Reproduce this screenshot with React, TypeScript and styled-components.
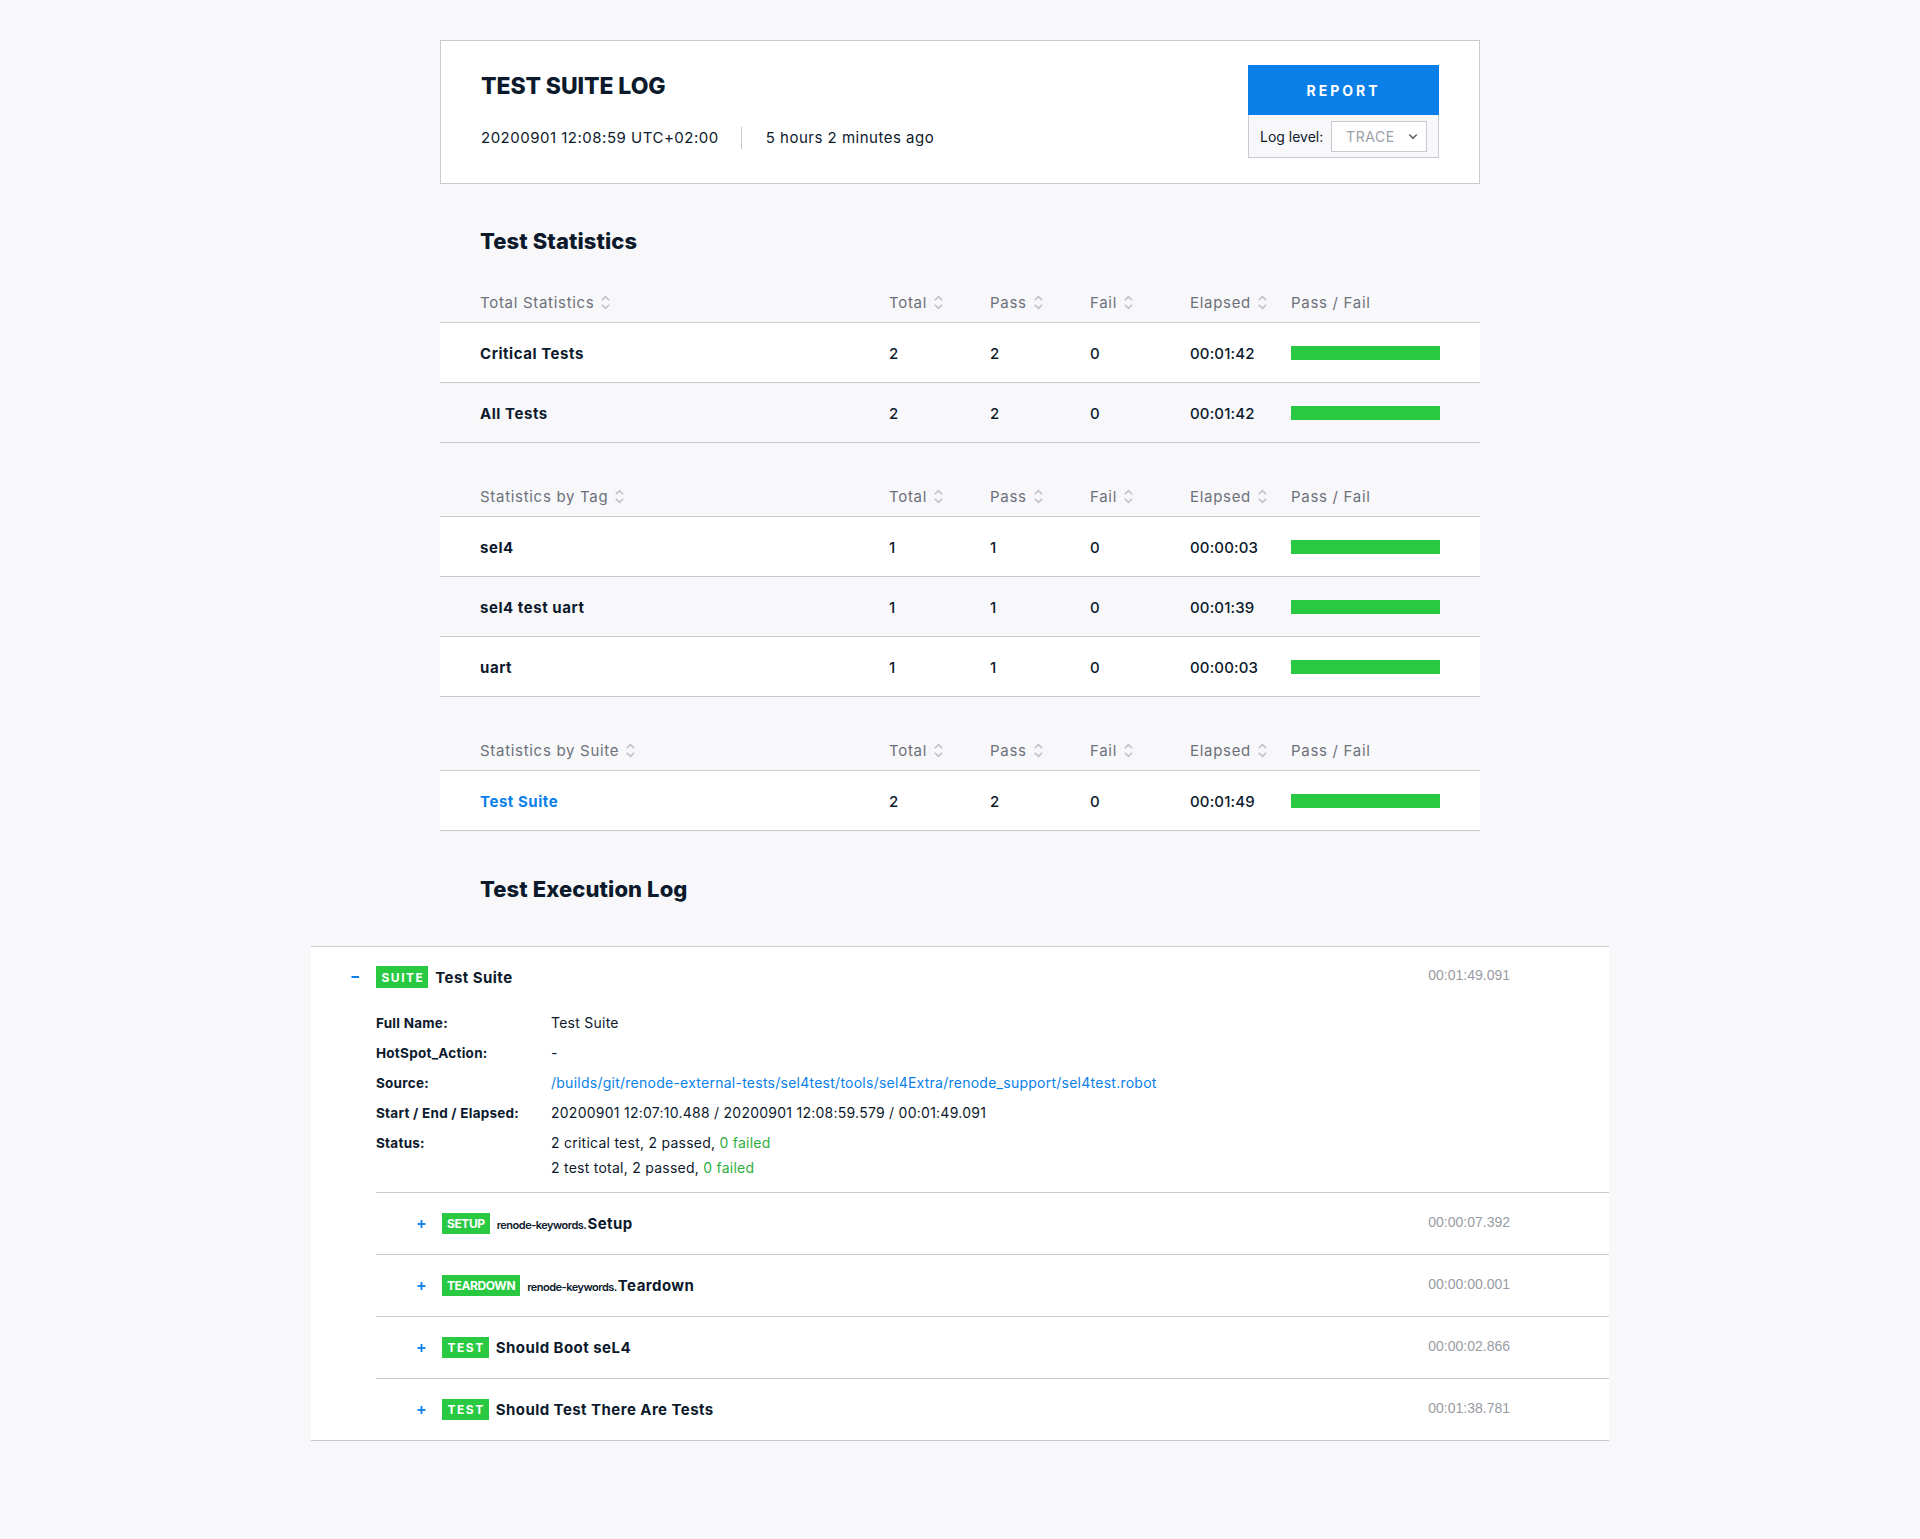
import React from "react";
import styled, { createGlobalStyle } from "styled-components";

const C = {
  bg: "#f8f8fa",
  text: "#0c1a2c",
  border: "#c9cacf",
  muted: "#6d717b",
  blue: "#0a7fe8",
  green: "#29c942",
  time: "#979ba3",
};

const GlobalStyle = createGlobalStyle`
  html, body { margin: 0; padding: 0; }
  body {
    background: ${C.bg};
    color: ${C.text};
    font-family: Inter, "Noto Sans", "DejaVu Sans", sans-serif;
    min-height: 1539px;
  }
  * { box-sizing: border-box; }
`;

const Page = styled.div`
  padding: 40px 0 100px;
`;

const Container = styled.div`
  width: 1040px;
  margin: 0 auto;
`;

const HeaderCard = styled.header`
  display: flex;
  justify-content: space-between;
  height: 144px;
  background: #fff;
  border: 1px solid ${C.border};
  padding: 24px 40px 0 40px;
`;

const HeaderInfo = styled.div`
  padding-top: 8px;
`;

const Title = styled.h1`
  margin: 0;
  font-size: 23px;
  line-height: 26px;
  font-weight: 800;
  letter-spacing: -0.1px;
`;

const MetaLine = styled.div`
  display: flex;
  align-items: center;
  margin-top: 28px;
  font-size: 15px;
  line-height: 22px;
  letter-spacing: 0.5px;
`;

const Divider = styled.span`
  width: 1px;
  height: 22px;
  background: ${C.border};
  margin: 0 24px 0 22px;
`;

const Actions = styled.div`
  width: 191px;
  display: flex;
  flex-direction: column;
`;

const ReportButton = styled.button`
  height: 50px;
  border: none;
  background: ${C.blue};
  color: #fff;
  font-family: inherit;
  font-size: 14px;
  font-weight: 700;
  letter-spacing: 3px;
  cursor: pointer;
`;

const LogLevel = styled.div`
  height: 43px;
  display: flex;
  align-items: center;
  padding: 0 11px;
  background: ${C.bg};
  border: 1px solid ${C.border};
  border-top: none;
  font-size: 14px;
`;

const SelectBox = styled.div`
  margin-left: auto;
  width: 96px;
  height: 31px;
  display: flex;
  align-items: center;
  justify-content: space-between;
  padding: 0 8px 0 14px;
  background: #fff;
  border: 1px solid ${C.border};
  color: #9aa0a8;
  font-size: 14px;
  letter-spacing: 0.6px;
`;

const SectionTitle = styled.h2<{ $top: number }>`
  margin: ${(p) => p.$top}px 0 0 40px;
  font-size: 22px;
  line-height: 28px;
  font-weight: 800;
  letter-spacing: 0.1px;
`;

const StatTable = styled.div<{ $top: number }>`
  margin-top: ${(p) => p.$top}px;
`;

const gridCols = `409px 101px 100px 100px 101px 1fr`;

const HeadRow = styled.div`
  display: grid;
  grid-template-columns: ${gridCols};
  align-items: center;
  height: 43px;
  padding: 3px 39px 0 40px;
  border-bottom: 1px solid ${C.border};
  color: ${C.muted};
  font-size: 15px;
  letter-spacing: 0.7px;
`;

const HeadCell = styled.div`
  display: flex;
  align-items: center;
  gap: 6px;
`;

const DataRow = styled.div<{ $alt?: boolean }>`
  display: grid;
  grid-template-columns: ${gridCols};
  align-items: center;
  height: 60px;
  padding: 1px 39px 0 40px;
  background: ${(p) => (p.$alt ? "transparent" : "#fff")};
  border-bottom: 1px solid ${C.border};
  font-size: 15px;
  font-weight: 500;
  letter-spacing: 0.15px;
`;

const NameCell = styled.div<{ $link?: boolean }>`
  font-weight: 700;
  letter-spacing: 0.55px;
  color: ${(p) => (p.$link ? C.blue : C.text)};
`;

const BarTrack = styled.div`
  width: 149px;
  height: 14px;
  background: #e04b4b;
  display: flex;
`;

const BarFill = styled.div`
  height: 100%;
  background: ${C.green};
`;

const LogPanel = styled.section`
  width: 1298px;
  margin: 43px auto 0;
  background: #fff;
  border-top: 1px solid ${C.border};
  border-bottom: 1px solid ${C.border};
`;

const SuiteHeader = styled.div`
  display: flex;
  align-items: center;
  padding: 19px 99px 0 40px;
  height: 41px;
`;

const Toggle = styled.span`
  width: 25px;
  display: flex;
  align-items: center;
`;

const Badge = styled.span<{ $spaced?: boolean; $h: number }>`
  display: inline-flex;
  align-items: center;
  height: ${(p) => p.$h}px;
  padding: 0 ${(p) => (p.$spaced ? 4 : 5)}px 0 ${(p) => (p.$spaced ? 5.5 : 5)}px;
  background: ${C.green};
  color: #fff;
  font-size: 12px;
  font-weight: 700;
  letter-spacing: ${(p) => (p.$spaced ? "1.5px" : "-0.4px")};
`;

const ItemName = styled.span`
  margin-left: 7px;
  font-size: 15px;
  font-weight: 700;
  letter-spacing: 0.45px;
  display: flex;
  align-items: baseline;
`;

const Library = styled.span`
  font-size: 11px;
  font-weight: 600;
  letter-spacing: -0.5px;
  margin-right: 1px;
`;

const Time = styled.span`
  margin-left: auto;
  margin-bottom: 4px;
  font-family: "Liberation Sans", Arial, sans-serif;
  font-size: 14px;
  color: ${C.time};
`;

const Metadata = styled.div`
  margin-left: 65px;
  padding: 20px 0 9px;
  font-size: 14px;
  letter-spacing: 0.25px;
`;

const MetaRow = styled.div`
  display: grid;
  grid-template-columns: 175px 1fr;
  padding: 5px 0;
  line-height: 20px;
`;

const MetaLabel = styled.div`
  font-weight: 700;
  font-size: 13.5px;
`;

const MetaValue = styled.div``;

const Link = styled.a`
  color: ${C.blue};
  text-decoration: none;
`;

const Failed = styled.span`
  color: #2fae3f;
`;

const StatusLine = styled.div<{ $second?: boolean }>`
  margin-top: ${(p) => (p.$second ? 5 : 0)}px;
`;

const Children = styled.div`
  margin-left: 65px;
`;

const ChildRow = styled.div`
  display: flex;
  align-items: center;
  height: 62px;
  padding: 0 99px 0 41px;
  border-top: 1px solid ${C.border};
`;

const SortIcon = () => (
  <svg width="11" height="15" viewBox="0 0 11 15" fill="none">
    <path d="M1.8 5.2 L5.5 1.6 L9.2 5.2" stroke="#bfc2c8" strokeWidth="1.6" />
    <path d="M1.8 9.8 L5.5 13.4 L9.2 9.8" stroke="#bfc2c8" strokeWidth="1.6" />
  </svg>
);

const Chevron = () => (
  <svg width="10" height="7" viewBox="0 0 10 7" fill="none">
    <path d="M1.2 1.5 L5 5.2 L8.8 1.5" stroke="#6a6e76" strokeWidth="1.7" />
  </svg>
);

const MinusIcon = () => (
  <svg width="9" height="10" viewBox="0 0 9 10">
    <rect x="0.5" y="4" width="7.5" height="2" fill={C.blue} />
  </svg>
);

const PlusIcon = () => (
  <svg width="9" height="10" viewBox="0 0 9 10">
    <rect x="0.5" y="4.1" width="8" height="1.8" fill={C.blue} />
    <rect x="3.6" y="1" width="1.8" height="8" fill={C.blue} />
  </svg>
);

type Stat = { name: string; total: number; pass: number; fail: number; elapsed: string; link?: boolean };

const totals: Stat[] = [
  { name: "Critical Tests", total: 2, pass: 2, fail: 0, elapsed: "00:01:42" },
  { name: "All Tests", total: 2, pass: 2, fail: 0, elapsed: "00:01:42" },
];
const tags: Stat[] = [
  { name: "sel4", total: 1, pass: 1, fail: 0, elapsed: "00:00:03" },
  { name: "sel4 test uart", total: 1, pass: 1, fail: 0, elapsed: "00:01:39" },
  { name: "uart", total: 1, pass: 1, fail: 0, elapsed: "00:00:03" },
];
const suites: Stat[] = [
  { name: "Test Suite", total: 2, pass: 2, fail: 0, elapsed: "00:01:49", link: true },
];

const StatsBlock = ({ title, rows, top }: { title: string; rows: Stat[]; top: number }) => (
  <StatTable $top={top}>
    <HeadRow>
      <HeadCell>
        {title} <SortIcon />
      </HeadCell>
      <HeadCell>
        Total <SortIcon />
      </HeadCell>
      <HeadCell>
        Pass <SortIcon />
      </HeadCell>
      <HeadCell>
        Fail <SortIcon />
      </HeadCell>
      <HeadCell>
        Elapsed <SortIcon />
      </HeadCell>
      <HeadCell>Pass / Fail</HeadCell>
    </HeadRow>
    {rows.map((r, i) => (
      <DataRow key={r.name} $alt={i % 2 === 1}>
        <NameCell $link={r.link}>{r.name}</NameCell>
        <div>{r.total}</div>
        <div>{r.pass}</div>
        <div>{r.fail}</div>
        <div>{r.elapsed}</div>
        <BarTrack>
          <BarFill style={{ width: `${(r.pass / r.total) * 100}%` }} />
        </BarTrack>
      </DataRow>
    ))}
  </StatTable>
);

type Child = { badge: string; spaced: boolean; lib?: string; name: string; time: string };
const children: Child[] = [
  { badge: "SETUP", spaced: false, lib: "renode-keywords", name: "Setup", time: "00:00:07.392" },
  { badge: "TEARDOWN", spaced: false, lib: "renode-keywords", name: "Teardown", time: "00:00:00.001" },
  { badge: "TEST", spaced: true, name: "Should Boot seL4", time: "00:00:02.866" },
  { badge: "TEST", spaced: true, name: "Should Test There Are Tests", time: "00:01:38.781" },
];

export default function App() {
  return (
    <>
      <GlobalStyle />
      <Page>
        <Container>
          <HeaderCard>
            <HeaderInfo>
              <Title>TEST SUITE LOG</Title>
              <MetaLine>
                <span>20200901 12:08:59 UTC+02:00</span>
                <Divider />
                <span>5 hours 2 minutes ago</span>
              </MetaLine>
            </HeaderInfo>
            <Actions>
              <ReportButton>REPORT</ReportButton>
              <LogLevel>
                <span>Log level:</span>
                <SelectBox>
                  <span>TRACE</span>
                  <Chevron />
                </SelectBox>
              </LogLevel>
            </Actions>
          </HeaderCard>

          <SectionTitle $top={43}>Test Statistics</SectionTitle>
          <StatsBlock title="Total Statistics" rows={totals} top={25} />
          <StatsBlock title="Statistics by Tag" rows={tags} top={31} />
          <StatsBlock title="Statistics by Suite" rows={suites} top={31} />

          <SectionTitle $top={44}>Test Execution Log</SectionTitle>
        </Container>

        <LogPanel>
          <SuiteHeader>
            <Toggle>
              <MinusIcon />
            </Toggle>
            <Badge $spaced $h={22}>SUITE</Badge>
            <ItemName>Test Suite</ItemName>
            <Time>00:01:49.091</Time>
          </SuiteHeader>
          <Metadata>
            <MetaRow>
              <MetaLabel>Full Name:</MetaLabel>
              <MetaValue>Test Suite</MetaValue>
            </MetaRow>
            <MetaRow>
              <MetaLabel>HotSpot_Action:</MetaLabel>
              <MetaValue>-</MetaValue>
            </MetaRow>
            <MetaRow>
              <MetaLabel>Source:</MetaLabel>
              <MetaValue>
                <Link href="#">/builds/git/renode-external-tests/sel4test/tools/sel4Extra/renode_support/sel4test.robot</Link>
              </MetaValue>
            </MetaRow>
            <MetaRow>
              <MetaLabel>Start / End / Elapsed:</MetaLabel>
              <MetaValue>20200901 12:07:10.488 / 20200901 12:08:59.579 / 00:01:49.091</MetaValue>
            </MetaRow>
            <MetaRow>
              <MetaLabel>Status:</MetaLabel>
              <MetaValue>
                <StatusLine>
                  2 critical test, 2 passed, <Failed>0 failed</Failed>
                </StatusLine>
                <StatusLine $second>
                  2 test total, 2 passed, <Failed>0 failed</Failed>
                </StatusLine>
              </MetaValue>
            </MetaRow>
          </Metadata>
          <Children>
            {children.map((c, i) => (
              <ChildRow key={i}>
                <Toggle>
                  <PlusIcon />
                </Toggle>
                <Badge $spaced={c.spaced} $h={21}>{c.badge}</Badge>
                <ItemName>
                  {c.lib && <Library>{c.lib}.</Library>}
                  {c.name}
                </ItemName>
                <Time>{c.time}</Time>
              </ChildRow>
            ))}
          </Children>
        </LogPanel>
      </Page>
    </>
  );
}
